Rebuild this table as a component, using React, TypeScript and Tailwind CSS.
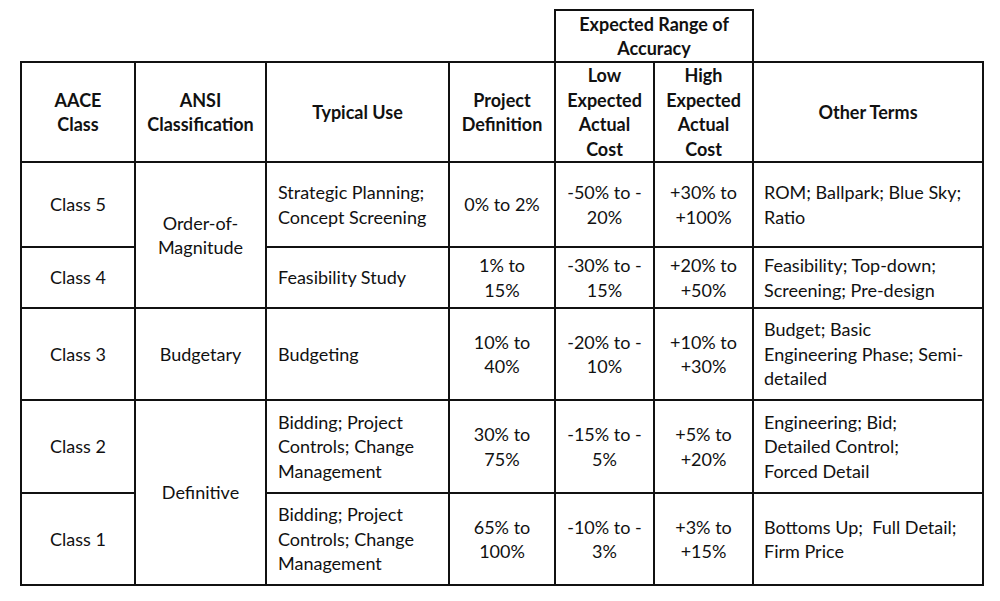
import React from 'react';

const cell = 'border-2 border-[#111] align-middle';

type Row = {
  cls: string;
  ansi?: { text: React.ReactNode; span: number };
  use: React.ReactNode;
  def: React.ReactNode;
  low: React.ReactNode;
  high: React.ReactNode;
  terms: React.ReactNode;
  h: string;
};

const rows: Row[] = [
  {
    cls: 'Class 5',
    ansi: { text: <>Order-of-<br />Magnitude</>, span: 2 },
    use: <>Strategic Planning;<br />Concept Screening</>,
    def: '0% to 2%',
    low: <>-50% to -<br />20%</>,
    high: <>+30% to<br />+100%</>,
    terms: <>ROM; Ballpark; Blue Sky;<br />Ratio</>,
    h: 'h-[85px]',
  },
  {
    cls: 'Class 4',
    use: 'Feasibility Study',
    def: <>1% to<br />15%</>,
    low: <>-30% to -<br />15%</>,
    high: <>+20% to<br />+50%</>,
    terms: <>Feasibility; Top-down;<br />Screening; Pre-design</>,
    h: 'h-[61px]',
  },
  {
    cls: 'Class 3',
    ansi: { text: 'Budgetary', span: 1 },
    use: 'Budgeting',
    def: <>10% to<br />40%</>,
    low: <>-20% to -<br />10%</>,
    high: <>+10% to<br />+30%</>,
    terms: <>Budget; Basic<br />Engineering Phase; Semi-<br />detailed</>,
    h: 'h-[92px]',
  },
  {
    cls: 'Class 2',
    ansi: { text: 'Definitive', span: 2 },
    use: <>Bidding; Project<br />Controls; Change<br />Management</>,
    def: <>30% to<br />75%</>,
    low: <>-15% to -<br />5%</>,
    high: <>+5% to<br />+20%</>,
    terms: <>Engineering; Bid;<br />Detailed Control;<br />Forced Detail</>,
    h: 'h-[93px]',
  },
  {
    cls: 'Class 1',
    use: <>Bidding; Project<br />Controls; Change<br />Management</>,
    def: <>65% to<br />100%</>,
    low: <>-10% to -<br />3%</>,
    high: <>+3% to<br />+15%</>,
    terms: <>Bottoms Up;&nbsp; Full Detail;<br />Firm Price</>,
    h: 'h-[92px]',
  },
];

export default function App() {
  return (
    <div className="w-[1000px] h-[601px] bg-white pt-[9px] pl-[20px] text-[#111] text-[18px] leading-[24.5px] font-['Lato',sans-serif]">
      <table className="table-fixed border-collapse w-[962px] whitespace-nowrap">
        <colgroup>
          <col className="w-[114px]" />
          <col className="w-[131px]" />
          <col className="w-[183px]" />
          <col className="w-[106px]" />
          <col className="w-[99px]" />
          <col className="w-[99px]" />
          <col className="w-[230px]" />
        </colgroup>
        <thead>
          <tr className="h-[52px] font-bold">
            <th colSpan={4} />
            <th colSpan={2} className={`${cell} text-center font-bold`}>
              Expected Range of<br />Accuracy
            </th>
            <th />
          </tr>
          <tr className="h-[100px] font-bold text-center">
            <th className={cell}>AACE<br />Class</th>
            <th className={cell}>ANSI<br />Classification</th>
            <th className={cell}>Typical Use</th>
            <th className={cell}>Project<br />Definition</th>
            <th className={cell}>Low<br />Expected<br />Actual<br />Cost</th>
            <th className={cell}>High<br />Expected<br />Actual<br />Cost</th>
            <th className={cell}>Other Terms</th>
          </tr>
        </thead>
        <tbody>
          {rows.map((r) => (
            <tr key={r.cls} className={r.h}>
              <td className={`${cell} text-center`}>{r.cls}</td>
              {r.ansi && (
                <td rowSpan={r.ansi.span} className={`${cell} text-center`}>
                  {r.ansi.text}
                </td>
              )}
              <td className={`${cell} pl-[11px]`}>{r.use}</td>
              <td className={`${cell} text-center`}>{r.def}</td>
              <td className={`${cell} text-center`}>{r.low}</td>
              <td className={`${cell} text-center`}>{r.high}</td>
              <td className={`${cell} pl-[10px]`}>{r.terms}</td>
            </tr>
          ))}
        </tbody>
      </table>
    </div>
  );
}
